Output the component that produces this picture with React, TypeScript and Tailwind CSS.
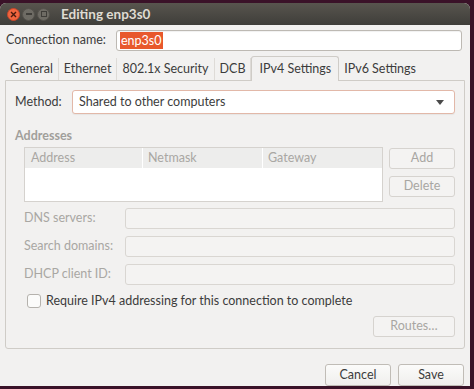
import React from 'react';

const font = { fontFamily: 'Lato, "Noto Sans", sans-serif' };

const tabs = ['General', 'Ethernet', '802.1x Security', 'DCB', 'IPv4 Settings', 'IPv6 Settings'];

function DisabledButton({ label, className }: { label: string; className: string }) {
  return (
    <div
      className={`flex items-center justify-center rounded-[3px] border border-[#d6d3cf] bg-[#f4f3f2] text-[12.5px] text-[#a8a6a2] ${className}`}
    >
      {label}
    </div>
  );
}

function FieldRow({ label }: { label: string }) {
  return (
    <div className="flex h-[21px] items-center">
      <span className="w-[110px] whitespace-nowrap pl-[9px] text-[12.5px] text-[#a9a7a3]">{label}</span>
      <div className="h-[21px] flex-1 rounded-[3px] border border-[#d9d6d2] bg-[#f4f3f2]" />
    </div>
  );
}

export default function App() {
  return (
    <div className="h-[389px] w-[474px] overflow-hidden bg-[#3a1228]" style={font}>
      <div className="mt-[3px] flex h-[383px] w-[470px] flex-col overflow-hidden rounded-t-[6px] bg-[#f2f1f0]">
        {/* title bar */}
        <div className="flex h-[22px] items-center bg-gradient-to-b from-[#58554e] to-[#3f3e3a] pl-[7px]">
          <div className="flex h-[13px] w-[13px] items-center justify-center rounded-full border border-[#c9462a] bg-[#f0653f]">
            <svg width="7" height="7" viewBox="0 0 7 7">
              <path d="M1 1 L6 6 M6 1 L1 6" stroke="#4a1a0e" strokeWidth="1.4" />
            </svg>
          </div>
          <div className="ml-[2px] flex h-[13px] w-[13px] items-center justify-center rounded-full border border-[#55524c] bg-[#6e6b64]">
            <div className="h-[2px] w-[6px] bg-[#3f3d39]" />
          </div>
          <div className="ml-[2px] flex h-[13px] w-[13px] items-center justify-center rounded-full border border-[#55524c] bg-[#6e6b64]">
            <div className="h-[6px] w-[6px] border border-[#3f3d39]" />
          </div>
          <span className="ml-[11px] whitespace-nowrap text-[13.5px] font-bold text-[#dfdbd2]">Editing enp3s0</span>
        </div>

        {/* connection name */}
        <div className="mt-[5px] flex h-[21px] items-center pl-[6px] pr-[8px]">
          <span className="w-[110px] whitespace-nowrap text-[12.5px] text-[#3c3c3c]">Connection name:</span>
          <div className="flex h-[21px] flex-1 items-center rounded-[3px] border border-[#bdb9b3] bg-white pl-[3px] shadow-[inset_0_1px_1px_rgba(0,0,0,0.06)]">
            <span className="bg-[#e8582c] px-[1px] text-[12.5px] leading-[17px] text-white">enp3s0</span>
          </div>
        </div>

        {/* tabs */}
        <div className="mt-[6px] flex h-[23px] items-end pl-[5px]">
          {tabs.map((t) =>
            t === 'IPv4 Settings' ? (
              <div
                key={t}
                className="relative z-10 -mb-px flex h-[25px] items-center whitespace-nowrap rounded-t-[3px] border border-b-0 border-[#cfccc7] bg-[#f2f1f0] px-[7px] text-[12.5px] text-[#3c3c3c]"
              >
                {t}
              </div>
            ) : (
              <div
                key={t}
                className="flex h-[22px] items-center whitespace-nowrap border-r border-[#dedbd7] px-[5px] text-[12.5px] text-[#3c3c3c] last:border-r-0"
              >
                {t}
              </div>
            )
          )}
        </div>

        {/* notebook page */}
        <div className="mx-[5px] flex h-[269px] flex-col rounded-b-[3px] border border-[#cfccc7] px-[9px] pt-[9px]">
          <div className="flex h-[24px] items-center">
            <span className="w-[57px] text-[12.5px] text-[#3c3c3c]">Method:</span>
            <div className="flex h-[24px] flex-1 items-center justify-between rounded-[3px] border border-[#e2b8a8] bg-white pl-[6px] pr-[10px] shadow-[0_1px_1px_rgba(0,0,0,0.05)]">
              <span className="text-[12.5px] text-[#3c3c3c]">Shared to other computers</span>
              <svg width="8" height="5" viewBox="0 0 8 5">
                <path d="M0 0 L8 0 L4 5 Z" fill="#4a4a4a" />
              </svg>
            </div>
          </div>

          <div className="mt-[13px] text-[12.5px] font-bold text-[#a19f9b]">Addresses</div>

          <div className="mt-[1px] flex pl-[9px]">
            <div className="h-[55px] w-[359px] border border-[#d5d2ce] bg-white">
              <div className="flex h-[20px] bg-[#ededec] text-[12.5px] text-[#a9a7a3]">
                <div className="w-[118px] border-r border-[#ffffff] pl-[6px] leading-[20px]">Address</div>
                <div className="w-[120px] border-r border-[#ffffff] pl-[5px] leading-[20px]">Netmask</div>
                <div className="flex-1 pl-[5px] leading-[20px]">Gateway</div>
              </div>
            </div>
            <div className="ml-[6px] flex flex-1 flex-col gap-[7px] pt-[1px]">
              <DisabledButton label="Add" className="h-[21px] w-full" />
              <DisabledButton label="Delete" className="h-[21px] w-full" />
            </div>
          </div>

          <div className="mt-[6px] flex flex-col gap-[7px]">
            <FieldRow label="DNS servers:" />
            <FieldRow label="Search domains:" />
            <FieldRow label="DHCP client ID:" />
          </div>

          <div className="mt-[7px] flex items-center pl-[12px]">
            <div className="h-[14px] w-[14px] rounded-[3px] border border-[#b5b2ad] bg-[#fbfbfa]" />
            <span className="ml-[5px] whitespace-nowrap text-[12.5px] text-[#3c3c3c]">
              Require IPv4 addressing for this connection to complete
            </span>
          </div>

          <div className="mt-[5px] flex justify-end">
            <DisabledButton label="Routes…" className="h-[21px] w-[82px]" />
          </div>
        </div>

        {/* bottom buttons */}
        <div className="mt-[15px] flex justify-end gap-[7px] pr-[6px]">
          <div className="flex h-[22px] w-[66px] items-center justify-center rounded-[3px] border border-[#c0bcb6] bg-gradient-to-b from-[#fbfbfa] to-[#f0efed] text-[12.5px] text-[#3c3c3c]">
            Cancel
          </div>
          <div className="flex h-[22px] w-[66px] items-center justify-center rounded-[3px] border border-[#c0bcb6] bg-gradient-to-b from-[#fbfbfa] to-[#f0efed] text-[12.5px] text-[#3c3c3c]">
            Save
          </div>
        </div>
      </div>
    </div>
  );
}
